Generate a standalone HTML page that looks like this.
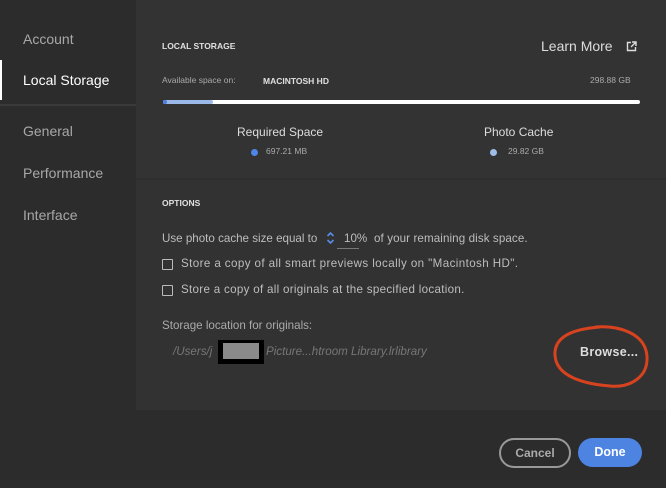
<!DOCTYPE html>
<html><head><style>
body{margin:0;width:666px;height:488px;background:#2c2c2c;font-family:"Liberation Sans",sans-serif;position:relative;overflow:hidden;color:#ccc}
.a{position:absolute;white-space:nowrap}
.side{font-size:14px;color:#a8a8a8}
.sm{font-size:8px;color:#bbb}
.cap{font-size:8.5px;font-weight:bold;color:#e0e0e0}
.t{font-size:11.6px;color:#bdbdbd}
.cb{position:absolute;width:9px;height:9px;border:1px solid #bbb;border-radius:1px}
</style></head><body>
<div class="a" style="left:136px;top:0;width:530px;height:178px;background:#333"></div>
<div class="a" style="left:136px;top:178px;width:530px;height:2px;background:#2e2e2e"></div>
<div class="a" style="left:136px;top:180px;width:530px;height:230px;background:#323232"></div>
<div class="a" style="left:0;top:60px;width:2px;height:40px;background:#fff"></div>
<div class="a" style="left:0;top:104px;width:136px;height:2px;background:#3a3a3a"></div>
<div class="a side" style="left:23px;top:31px">Account</div>
<div class="a side" style="left:23px;top:72px;color:#fff">Local Storage</div>
<div class="a side" style="left:23px;top:123px">General</div>
<div class="a side" style="left:23px;top:165px">Performance</div>
<div class="a side" style="left:23px;top:207px">Interface</div>
<div class="a cap" style="left:162px;top:41px">LOCAL STORAGE</div>
<div class="a" style="left:541px;top:38px;font-size:14px;color:#ddd">Learn More</div>
<svg class="a" style="left:626px;top:41px" width="11" height="11" viewBox="0 0 11 11" fill="none" stroke="#ddd" stroke-width="1.4"><path d="M5 1.5H1.5v8h8V6M6 1h4v4M10 1L5 6"/></svg>
<div class="a sm" style="left:162px;top:75px;color:#aaa;font-size:8.5px">Available space on:</div>
<div class="a cap" style="left:263px;top:76px">MACINTOSH HD</div>
<div class="a sm" style="left:590px;top:75px;color:#aaa;font-size:8.5px">298.88 GB</div>
<div class="a" style="left:163px;top:100px;width:477px;height:4px;background:#fff;border-radius:2px"></div>
<div class="a" style="left:163px;top:100px;width:50px;height:4px;background:#9ab8e8;border-radius:2px"></div>
<div class="a" style="left:163px;top:100px;width:4px;height:4px;background:#4d7fe0;border-radius:2px"></div>
<div class="a" style="left:237px;top:125px;font-size:12px;color:#ddd">Required Space</div>
<div class="a" style="left:251px;top:149px;width:7px;height:7px;border-radius:50%;background:#4d85e8"></div>
<div class="a sm" style="left:266px;top:146px;color:#aaa;font-size:8.5px">697.21 MB</div>
<div class="a" style="left:484px;top:125px;font-size:12px;color:#ddd">Photo Cache</div>
<div class="a" style="left:490px;top:149px;width:7px;height:7px;border-radius:50%;background:#a0bde8"></div>
<div class="a sm" style="left:508px;top:146px;color:#aaa;font-size:8.5px">29.82 GB</div>
<div class="a cap" style="left:162px;top:198px">OPTIONS</div>
<div class="a t" style="left:162px;top:232px">Use photo cache size equal to</div>
<svg class="a" style="left:326px;top:231px" width="9" height="14" viewBox="0 0 9 14" fill="none" stroke="#5a8de8" stroke-width="1.6"><path d="M1.5 5L4.5 2l3 3M1.5 9l3 3 3-3"/></svg>
<div class="a t" style="left:344px;top:232px">10%</div>
<div class="a" style="left:337px;top:248px;width:22px;height:1px;background:#777"></div>
<div class="a t" style="left:374px;top:232px;letter-spacing:0.1px">of your remaining disk space.</div>
<div class="cb" style="left:162px;top:259px"></div>
<div class="a t" style="left:181px;top:257px;letter-spacing:0.4px">Store a copy of all smart previews locally on "Macintosh HD".</div>
<div class="cb" style="left:162px;top:285px"></div>
<div class="a t" style="left:181px;top:283px;letter-spacing:0.3px">Store a copy of all originals at the specified location.</div>
<div class="a t" style="left:162px;top:319px;color:#aaa">Storage location for originals:</div>
<div class="a t" style="left:173px;top:345px;color:#777;font-style:italic">/Users/j</div>
<div class="a" style="left:218px;top:340px;width:46px;height:24px;background:#000"></div>
<div class="a" style="left:223px;top:343px;width:36px;height:16px;background:#8a8a8a"></div>
<div class="a t" style="left:266px;top:345px;color:#777;font-style:italic">Picture...htroom Library.lrlibrary</div>
<div class="a" style="left:580px;top:345px;font-size:12.5px;font-weight:bold;color:#ddd;letter-spacing:0.3px">Browse...</div>
<svg class="a" style="left:550px;top:322px" width="100" height="70" viewBox="0 0 100 70" fill="none" stroke="#d8431f" stroke-width="3"><path d="M45 5C70 3 96 12 97 35 98 55 80 66 60 64 35 62 6 55 5 33 4 15 22 7 50 5"/></svg>
<div class="a" style="left:499px;top:438px;width:68px;height:26px;border:2px solid #999;border-radius:15px;color:#aaa;font-size:12px;text-align:center;line-height:26px;font-weight:bold">Cancel</div>
<div class="a" style="left:578px;top:438px;width:64px;height:29px;background:#4d84e2;border-radius:15px;color:#fff;font-size:12.5px;text-align:center;line-height:29px;font-weight:bold">Done</div>
</body></html>
